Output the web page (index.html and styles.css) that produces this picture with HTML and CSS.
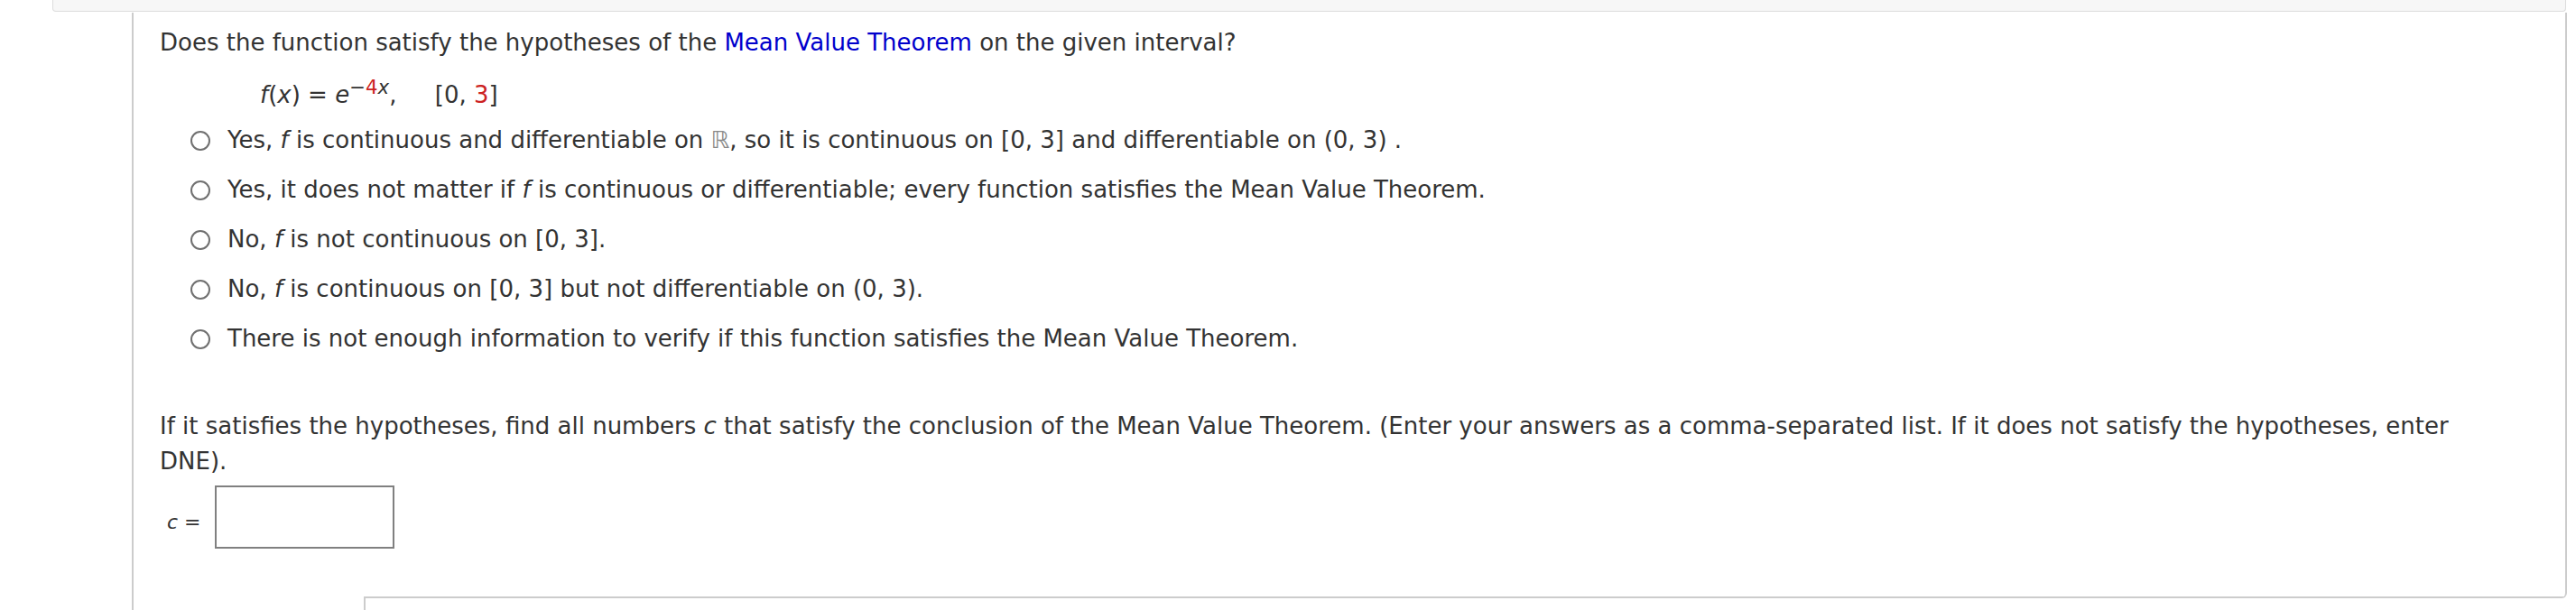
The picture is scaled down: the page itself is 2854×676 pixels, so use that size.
FILE: index.html
```html
<!DOCTYPE html>
<html lang="en">
<head>
    <meta charset="UTF-8">
    <meta name="viewport" content="width=device-width, initial-scale=1.0">
    <title>Mean Value Theorem - Question</title>
    <link rel="stylesheet" href="styles.css">
</head>
<body>
    <div class="topbar"></div>
    <div class="question">
        <div class="question-body">
            <p class="prompt">Does the function satisfy the hypotheses of the <a href="#" class="glossary">Mean Value Theorem</a> on the given interval?</p>
            <p class="formula"><i>f</i>(<i>x</i>) = <i>e</i><sup>&minus;<span class="red">4</span><i>x</i></sup>, <span class="interval">[0, <span class="red">3</span>]</span></p>
            <div class="options">
                <label class="option"><input type="radio" name="mvt"> <span>Yes, <i>f</i> is continuous and differentiable on <span class="reals">&#8477;</span>, so it is continuous on [0, 3] and differentiable on (0, 3) .</span></label>
                <label class="option"><input type="radio" name="mvt"> <span>Yes, it does not matter if <i>f</i> is continuous or differentiable; every function satisfies the Mean Value Theorem.</span></label>
                <label class="option"><input type="radio" name="mvt"> <span>No, <i>f</i> is not continuous on [0, 3].</span></label>
                <label class="option"><input type="radio" name="mvt"> <span>No, <i>f</i> is continuous on [0, 3] but not differentiable on (0, 3).</span></label>
                <label class="option"><input type="radio" name="mvt"> <span>There is not enough information to verify if this function satisfies the Mean Value Theorem.</span></label>
            </div>
            <p class="part">If it satisfies the hypotheses, find all numbers <i>c</i> that satisfy the conclusion of the Mean Value Theorem. (Enter your answers as a comma-separated list. If it does not satisfy the hypotheses, enter DNE).</p>
            <div class="answer-row">
                <span class="answer-label"><i>c</i> =</span>
                <input type="text" class="answer">
            </div>
        </div>
        <div class="question-foot"></div>
    </div>
</body>
</html>
```

FILE: styles.css
```css
body {
    font-family: 'DejaVu Sans', Verdana, sans-serif;
    margin: 0;
    padding: 0;
    background: white;
    color: #333;
    font-size: 26px;
}

.topbar {
    margin-left: 58px;
    width: 2783px;
    height: 12px;
    background: #f7f7f7;
    border: 1px solid #dcdcdc;
    border-top: none;
    border-radius: 0 0 4px 4px;
}

.question {
    margin-left: 146px;
    margin-top: 1px;
    width: 2696px;
    border-left: 2px solid #ccc;
}

.question-body {
    border-right: 2px solid #ccc;
    border-bottom-right-radius: 6px;
    padding: 14px 62px 55px 29px;
    background: linear-gradient(#ccc, #ccc) no-repeat right bottom / calc(100% - 255px) 2px;
}

.question-foot {
    margin-left: 255px;
    height: 20px;
    border-left: 2px solid #ccc;
}

p {
    margin: 0;
    line-height: 39px;
}

.glossary {
    color: #0000cc;
    text-decoration: none;
}

.red {
    color: #cc2222;
}

.formula {
    margin-top: 19px;
    padding-left: 111px;
}

.formula sup {
    font-size: 0.82em;
    line-height: 0;
    vertical-align: 0.45em;
}

.interval {
    margin-left: 34px;
}

.options {
    margin-top: 3px;
}

.option {
    display: flex;
    align-items: center;
    padding: 8px 0 8px 34px;
    line-height: 39px;
}

.option input {
    appearance: none;
    width: 22px;
    height: 22px;
    margin: 0 19px 0 0;
    border: 2px solid #707070;
    border-radius: 50%;
    background: white;
}

.reals {
    color: #888;
}

.part {
    margin-top: 50px;
}

.answer-row {
    display: flex;
    align-items: center;
    margin-top: 7px;
}

.answer-label {
    font-size: 22px;
    margin-left: 8px;
    margin-right: 15px;
    padding-top: 10px;
}

.answer {
    width: 199px;
    height: 70px;
    box-sizing: border-box;
    border: 2px solid #808080;
    margin: 0;
    font-size: 22px;
}
```
